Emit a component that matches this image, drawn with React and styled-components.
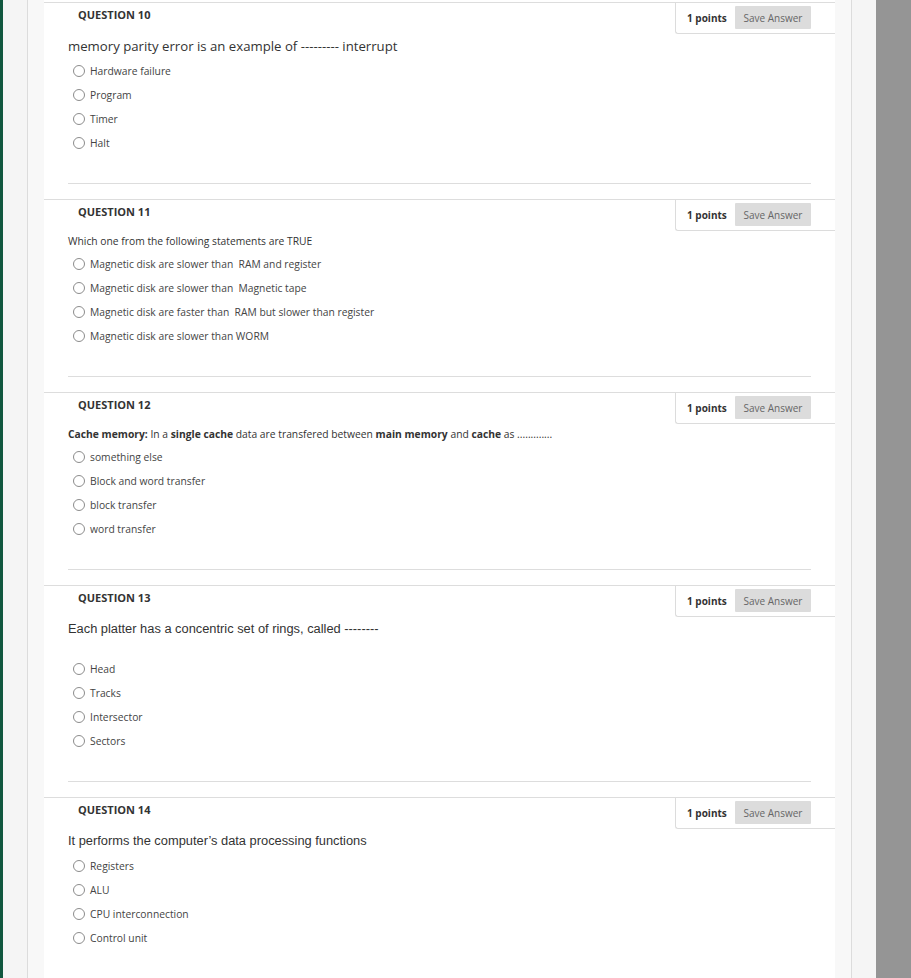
import React from "react";
import styled, { createGlobalStyle } from "styled-components";

const GlobalStyle = createGlobalStyle`
  html, body {
    margin: 0;
    padding: 0;
    background: #f7f7f7;
  }
  body {
    font-family: "Open Sans", "Liberation Sans", sans-serif;
    color: #333;
  }
`;

const questions = [
  {
    number: 10,
    variant: "large",
    text: "memory parity error is an example of --------- interrupt",
    options: ["Hardware failure", "Program", "Timer", "Halt"],
  },
  {
    number: 11,
    variant: "small",
    text: "Which one from the following statements are TRUE",
    options: [
      "Magnetic disk are slower than  RAM and register",
      "Magnetic disk are slower than  Magnetic tape",
      "Magnetic disk are faster than  RAM but slower than register",
      "Magnetic disk are slower than WORM",
    ],
  },
  {
    number: 12,
    variant: "small",
    text: (
      <>
        <b>Cache memory:</b> In a <b>single cache</b> data are transfered between{" "}
        <b>main memory</b> and <b>cache</b> as .............
      </>
    ),
    options: ["something else", "Block and word transfer", "block transfer", "word transfer"],
  },
  {
    number: 13,
    variant: "arial",
    blankLine: true,
    text: "Each platter has a concentric set of rings, called --------",
    options: ["Head", "Tracks", "Intersector", "Sectors"],
  },
  {
    number: 14,
    variant: "arial",
    text: "It performs the computer\u2019s data processing functions",
    options: ["Registers", "ALU", "CPU interconnection", "Control unit"],
  },
];

const App = () => {
  return (
    <>
      <GlobalStyle />
      <Page>
        <GreenStrip />
        <SideGutter $side="left" />
        <Main>
          <Panel>
            {questions.map((q) => (
              <QuestionBlock key={q.number}>
                <Header>
                  <QuestionLabel>QUESTION {q.number}</QuestionLabel>
                  <PointsBox>
                    <Points>1 points</Points>
                    <SaveButton type="button">Save Answer</SaveButton>
                  </PointsBox>
                </Header>
                <Body>
                  <QuestionText $variant={q.variant}>{q.text}</QuestionText>
                  {q.blankLine && <BlankLine />}
                  <Options>
                    {q.options.map((opt) => (
                      <Option key={opt}>
                        <Radio />
                        <OptionText>{opt}</OptionText>
                      </Option>
                    ))}
                  </Options>
                </Body>
              </QuestionBlock>
            ))}
          </Panel>
        </Main>
        <SideGutter $side="right" />
        <Scrollbar />
      </Page>
    </>
  );
};

export default App;

const Page = styled.div`
  display: flex;
  width: 911px;
  height: 978px;
  overflow: hidden;
  background: #f7f7f7;
`;

const GreenStrip = styled.div`
  width: 3px;
  flex-shrink: 0;
  background: #11573f;
`;

const SideGutter = styled.div`
  width: 24px;
  flex-shrink: 0;
  background: #f5f5f5;
  border-${(p) => (p.$side === "left" ? "right" : "left")}: 1px solid #dcdcdc;
`;

const Main = styled.div`
  flex: 1;
  padding: 0 16px;
  background: #f8f8f8;
`;

const Panel = styled.div`
  background: #fff;
  height: 100%;
  padding-top: 2px;
`;

const Scrollbar = styled.div`
  width: 35px;
  flex-shrink: 0;
  background: #959595;
`;

const QuestionBlock = styled.section`
  border-top: 1px solid #dddddd;
  margin-bottom: 15px;
`;

const Header = styled.div`
  display: flex;
  justify-content: space-between;
  align-items: flex-start;
  height: 31px;
`;

const QuestionLabel = styled.div`
  padding-left: 34px;
  margin-top: 4px;
  font-size: 11px;
  font-weight: 700;
  line-height: 16px;
  color: #333;
`;

const PointsBox = styled.div`
  display: flex;
  align-items: center;
  gap: 8px;
  height: 30px;
  padding: 0 24px 0 11px;
  border-left: 1px solid #dcdcdc;
  border-bottom: 1px solid #dcdcdc;
  border-bottom-left-radius: 3px;
`;

const Points = styled.span`
  width: 40px;
  font-size: 10px;
  font-weight: 700;
  white-space: nowrap;
  color: #333;
`;

const SaveButton = styled.button`
  width: 76px;
  height: 23px;
  margin: -1px 0 0;
  padding: 0;
  border: none;
  border-radius: 1px;
  background: #dcdcdc;
  font-family: "Open Sans", "Liberation Sans", sans-serif;
  font-size: 10px;
  color: #666;
`;

const Body = styled.div`
  margin: 0 24px;
  padding-top: 2px;
  padding-bottom: 28px;
  border-bottom: 1px solid #dddddd;
`;

const textVariants = {
  large: `font-family: "Open Sans", "Liberation Sans", sans-serif; font-size: 13.2px; line-height: 20px;`,
  small: `font-family: "Open Sans", "Liberation Sans", sans-serif; font-size: 10.3px; line-height: 16px;`,
  arial: `font-family: "Liberation Sans", Arial, sans-serif; font-size: 12.85px; line-height: 20px;`,
};

const QuestionText = styled.div`
  ${(p) => textVariants[p.$variant]}
  color: #333;
  b {
    font-weight: 700;
  }
`;

const BlankLine = styled.div`
  height: 15px;
`;

const Options = styled.ul`
  list-style: none;
  margin: 3px 0 0;
  padding: 0 0 0 5px;
`;

const Option = styled.li`
  display: flex;
  align-items: center;
  gap: 5px;
  height: 24px;
`;

const Radio = styled.span`
  width: 10px;
  height: 10px;
  flex-shrink: 0;
  border: 1px solid #8c8c8c;
  border-radius: 50%;
  background: #fff;
`;

const OptionText = styled.span`
  font-size: 10.3px;
  color: #444;
  white-space: pre;
`;
